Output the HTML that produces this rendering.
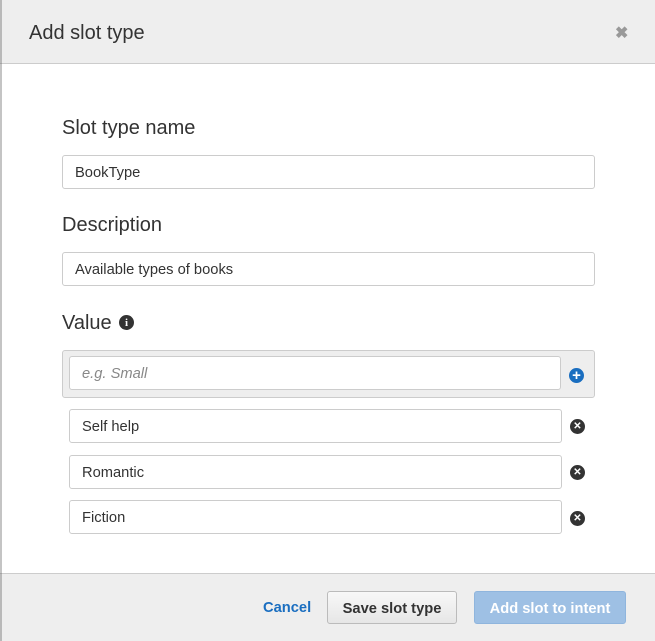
<!DOCTYPE html>
<html><head><style>
*{box-sizing:border-box;margin:0;padding:0}
body{width:655px;height:641px;background:#fff;font-family:"Liberation Sans",sans-serif;color:#333;position:relative;overflow:hidden}
.abs{position:absolute}
.hdr{left:0;top:0;width:655px;height:64px;background:#eee;border-bottom:1px solid #ccc}
.lbl{font-size:20px;color:#333}
.inp{border:1px solid #ccc;border-radius:3px;background:#fff;font-size:14.7px;padding-left:12px;padding-top:1px;display:flex;align-items:center;color:#333}
.ic{width:15px;height:15px;border-radius:50%;display:flex;align-items:center;justify-content:center}
.ftr{left:0;top:573px;width:655px;height:68px;background:#eee;border-top:1px solid #ccc}
.btn{border-radius:3px;font-size:14.7px;font-weight:bold;display:flex;align-items:center;justify-content:center}
</style></head><body>
<div class="abs" style="left:0;top:0;width:2px;height:641px;background:#555;z-index:5;opacity:.35"></div>
<div class="abs hdr"></div>
<div class="abs" style="left:29px;top:22px;font-size:20px;color:#333">Add slot type</div>
<div class="abs" style="left:615px;top:23px;font-size:16px;color:#999;font-weight:bold">✖</div>

<div class="abs lbl" style="left:62px;top:117px">Slot type name</div>
<div class="abs inp" style="left:62px;top:155px;width:533px;height:34px">BookType</div>
<div class="abs lbl" style="left:62px;top:214px">Description</div>
<div class="abs inp" style="left:62px;top:252px;width:533px;height:34px">Available types of books</div>
<div class="abs lbl" style="left:62px;top:312px">Value</div>
<div class="abs ic" style="left:119px;top:315px;background:#333;color:#fff;font-size:11px;font-weight:bold;font-family:'Liberation Serif',serif">i</div>

<div class="abs" style="left:62px;top:350px;width:533px;height:48px;background:#eee;border:1px solid #ccc;border-radius:3px"></div>
<div class="abs inp" style="left:69px;top:356px;width:492px;height:34px;color:#888;font-style:italic">e.g. Small</div>
<div class="abs ic" style="left:569px;top:368px;background:#1a6ec0;color:#fff;font-size:15px;font-weight:bold">+</div>

<div class="abs inp" style="left:69px;top:409px;width:493px;height:34px">Self help</div>
<div class="abs ic" style="left:570px;top:419px;background:#333;color:#fff;font-size:10px;font-weight:bold">✕</div>
<div class="abs inp" style="left:69px;top:455px;width:493px;height:34px">Romantic</div>
<div class="abs ic" style="left:570px;top:465px;background:#333;color:#fff;font-size:10px;font-weight:bold">✕</div>
<div class="abs inp" style="left:69px;top:500px;width:493px;height:34px">Fiction</div>
<div class="abs ic" style="left:570px;top:511px;background:#333;color:#fff;font-size:10px;font-weight:bold">✕</div>

<div class="abs ftr"></div>
<div class="abs" style="left:263px;top:600px;font-size:14.7px;font-weight:bold;color:#1a6ec0">Cancel</div>
<div class="abs btn" style="left:327px;top:591px;width:130px;height:33px;background:linear-gradient(#f8f8f8,#e6e6e6);border:1px solid #bbb;color:#333;padding-top:2px">Save slot type</div>
<div class="abs btn" style="left:474px;top:591px;width:152px;height:33px;background:#9ec0e4;border:1px solid #8fb5dd;color:#fff;padding-top:2px">Add slot to intent</div>
</body></html>
